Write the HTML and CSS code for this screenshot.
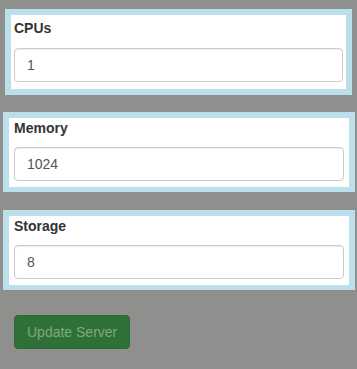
FILE: index.html
```html
<html>
<head>
    <link rel="stylesheet" href="styles.css">
</head>
<body>
    <main class="server-form">
        <div class="field field-first">
            <label for="cpus">CPUs</label>
            <input id="cpus" class="field-input" type="text" value="1">
        </div>
        <div class="field field-mid">
            <label for="memory">Memory</label>
            <input id="memory" class="field-input" type="text" value="1024">
        </div>
        <div class="field field-last">
            <label for="storage">Storage</label>
            <input id="storage" class="field-input" type="text" value="8">
        </div>
        <button id="update" disabled>Update Server</button>
    </main>
</body>
</html>
```

FILE: styles.css
```css
* {
    margin: 0;
    padding: 0;
    box-sizing: border-box;
}
body {
    background-color: #8f8f8d;
    font-family: "Liberation Sans", Arial, sans-serif;
    font-size: 14px;
    line-height: 20px;
    color: #333;
}
.server-form {
    padding-top: 9px;
    display: flex;
    flex-direction: column;
    align-items: flex-start;
}
.field {
    display: flex;
    flex-direction: column;
    background-color: #fff;
    border: 6px solid #bce0eb;
    border-bottom-width: 5px;
    width: 352px;
    margin-left: 3px;
    padding: 0 5px 6px;
}
.field-first {
    width: 347px;
    margin-left: 5px;
    border-bottom-width: 6px;
    padding: 3px 3px 7px;
}
.field-mid {
    margin-top: 17px;
}
.field-last {
    margin-top: 18px;
}
.field label {
    font-weight: bold;
    margin-bottom: 9px;
}
.field-first label {
    margin-bottom: 10px;
}
.field-input {
    height: 34px;
    width: 100%;
    padding: 6px 12px;
    font-family: inherit;
    font-size: 14px;
    color: #555;
    background-color: #fff;
    border: 1px solid #ccc;
    border-radius: 4px;
    box-shadow: inset 0 1px 1px rgba(0,0,0,0.075);
}
#update {
    margin: 25px 0 0 14px;
    height: 34px;
    padding: 6px 12px;
    font-family: inherit;
    font-size: 14px;
    color: #7eaa80;
    background-color: #2f7039;
    border: 1px solid #2b6934;
    border-radius: 4px;
}
```
